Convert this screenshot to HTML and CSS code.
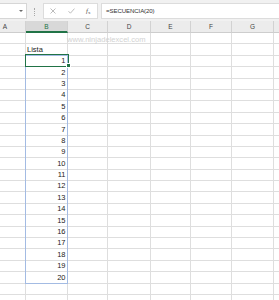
FILE: index.html
```html
<!DOCTYPE html>
<html>
<head>
<meta charset="utf-8">
<link rel="stylesheet" href="styles.css">
</head>
<body>
<div class="bar">
  <div class="namebox"><span class="caret"></span></div>
  <div class="grip"></div>
  <div class="fnbox">
    <svg class="ic-x" width="6" height="6" viewBox="0 0 6 6"><path d="M0.5 0.5L5.5 5.5M5.5 0.5L0.5 5.5" stroke="#b4b4b4" stroke-width="0.9" fill="none"/></svg>
    <svg class="ic-ok" width="7" height="6" viewBox="0 0 7 6"><path d="M0.5 3.2L2.4 5.2L6.5 0.6" stroke="#b4b4b4" stroke-width="0.9" fill="none"/></svg>
    <span class="fx"><i>f</i><sub>x</sub></span>
  </div>
  <div class="formula">=SECUENCIA(20)</div>
</div>
<div class="sheet">
  <div class="grid">
    <div class="h">A</div><div class="h sel">B</div><div class="h">C</div><div class="h">D</div><div class="h">E</div><div class="h">F</div><div class="h">G</div><div class="h"></div>
    <div class="c"></div><div class="c"></div><div class="c"></div><div class="c"></div><div class="c"></div><div class="c"></div><div class="c"></div><div class="c"></div>
    <div class="c"></div><div class="c l">Lista</div><div class="c"></div><div class="c"></div><div class="c"></div><div class="c"></div><div class="c"></div><div class="c"></div>
    <div class="c"></div><div class="c">1</div><div class="c"></div><div class="c"></div><div class="c"></div><div class="c"></div><div class="c"></div><div class="c"></div>
    <div class="c"></div><div class="c">2</div><div class="c"></div><div class="c"></div><div class="c"></div><div class="c"></div><div class="c"></div><div class="c"></div>
    <div class="c"></div><div class="c">3</div><div class="c"></div><div class="c"></div><div class="c"></div><div class="c"></div><div class="c"></div><div class="c"></div>
    <div class="c"></div><div class="c">4</div><div class="c"></div><div class="c"></div><div class="c"></div><div class="c"></div><div class="c"></div><div class="c"></div>
    <div class="c"></div><div class="c">5</div><div class="c"></div><div class="c"></div><div class="c"></div><div class="c"></div><div class="c"></div><div class="c"></div>
    <div class="c"></div><div class="c">6</div><div class="c"></div><div class="c"></div><div class="c"></div><div class="c"></div><div class="c"></div><div class="c"></div>
    <div class="c"></div><div class="c">7</div><div class="c"></div><div class="c"></div><div class="c"></div><div class="c"></div><div class="c"></div><div class="c"></div>
    <div class="c"></div><div class="c">8</div><div class="c"></div><div class="c"></div><div class="c"></div><div class="c"></div><div class="c"></div><div class="c"></div>
    <div class="c"></div><div class="c">9</div><div class="c"></div><div class="c"></div><div class="c"></div><div class="c"></div><div class="c"></div><div class="c"></div>
    <div class="c"></div><div class="c">10</div><div class="c"></div><div class="c"></div><div class="c"></div><div class="c"></div><div class="c"></div><div class="c"></div>
    <div class="c"></div><div class="c">11</div><div class="c"></div><div class="c"></div><div class="c"></div><div class="c"></div><div class="c"></div><div class="c"></div>
    <div class="c"></div><div class="c">12</div><div class="c"></div><div class="c"></div><div class="c"></div><div class="c"></div><div class="c"></div><div class="c"></div>
    <div class="c"></div><div class="c">13</div><div class="c"></div><div class="c"></div><div class="c"></div><div class="c"></div><div class="c"></div><div class="c"></div>
    <div class="c"></div><div class="c">14</div><div class="c"></div><div class="c"></div><div class="c"></div><div class="c"></div><div class="c"></div><div class="c"></div>
    <div class="c"></div><div class="c">15</div><div class="c"></div><div class="c"></div><div class="c"></div><div class="c"></div><div class="c"></div><div class="c"></div>
    <div class="c"></div><div class="c">16</div><div class="c"></div><div class="c"></div><div class="c"></div><div class="c"></div><div class="c"></div><div class="c"></div>
    <div class="c"></div><div class="c">17</div><div class="c"></div><div class="c"></div><div class="c"></div><div class="c"></div><div class="c"></div><div class="c"></div>
    <div class="c"></div><div class="c">18</div><div class="c"></div><div class="c"></div><div class="c"></div><div class="c"></div><div class="c"></div><div class="c"></div>
    <div class="c"></div><div class="c">19</div><div class="c"></div><div class="c"></div><div class="c"></div><div class="c"></div><div class="c"></div><div class="c"></div>
    <div class="c"></div><div class="c">20</div><div class="c"></div><div class="c"></div><div class="c"></div><div class="c"></div><div class="c"></div><div class="c"></div>
    <div class="c"></div><div class="c"></div><div class="c"></div><div class="c"></div><div class="c"></div><div class="c"></div><div class="c"></div><div class="c"></div>
    <div class="c"></div><div class="c"></div><div class="c"></div><div class="c"></div><div class="c"></div><div class="c"></div><div class="c"></div><div class="c"></div>
    <div class="spill"></div>
    <div class="active"><span class="handle"></span></div>
    <div class="wm">www.ninjadelexcel.com</div>
  </div>
</div>
</body>
</html>
```
FILE: styles.css
```css
html, body {
  margin: 0;
  padding: 0;
  background: #ffffff;
  overflow: hidden;
  width: 279px;
  height: 300px;
  font-family: "Liberation Sans", Arial, sans-serif;
}

.bar {
  height: 21px;
  box-sizing: border-box;
  padding-top: 3px;
  background: #f1f1f1;
  display: flex;
  align-items: flex-start;
}

.namebox {
  width: 28px;
  height: 16px;
  box-sizing: border-box;
  margin-left: -1px;
  background: #ffffff;
  border: 1px solid #d6d6d6;
  display: flex;
  align-items: center;
  justify-content: flex-end;
  padding-right: 3px;
}

.caret {
  width: 0;
  height: 0;
  border-left: 2px solid transparent;
  border-right: 2px solid transparent;
  border-top: 2.5px solid #6a6a6a;
}

.grip {
  width: 0;
  height: 8px;
  margin: 5px 0 0 7px;
  border-left: 1px dotted #a8a8a8;
}

.fnbox {
  width: 55px;
  height: 16px;
  box-sizing: border-box;
  margin-left: 8px;
  background: #ffffff;
  border: 1px solid #dcdcdc;
  display: flex;
  align-items: center;
}

.ic-x { margin-left: 6px; }
.ic-ok { margin-left: 12px; }

.fx {
  margin-left: 11px;
  font-family: "Liberation Serif", serif;
  font-size: 7px;
  color: #555555;
  line-height: 1;
}
.fx sub { font-size: 5px; vertical-align: -1px; font-style: normal; }

.formula {
  flex: 1;
  min-width: 0;
  height: 16px;
  box-sizing: border-box;
  margin-left: 3px;
  background: #ffffff;
  border: 1px solid #dcdcdc;
  border-right: none;
  padding-left: 4px;
  font-size: 6.1px;
  letter-spacing: -0.1px;
  line-height: 14px;
  color: #333333;
}

.sheet {
  position: relative;
}

.grid {
  position: relative;
  margin-left: -15px;
  display: grid;
  grid-template-columns: 41px 42px 40px 43px 40px 41px 42px 41px;
  grid-template-rows: 12px;
  grid-auto-rows: 11.4px;
}

.h {
  background: #ececec;
  border-right: 1px solid #d2d2d2;
  border-bottom: 1px solid #cdcdcd;
  box-sizing: border-box;
  font-size: 6.5px;
  color: #444444;
  display: flex;
  align-items: center;
  justify-content: center;
}

.h.sel {
  background: #d8d8d8;
  color: #217346;
  border-bottom: 2px solid #217346;
}

.c {
  border-right: 1px solid #dedede;
  border-bottom: 1px solid #dedede;
  box-sizing: border-box;
  font-size: 7.5px;
  line-height: 10px;
  color: #222222;
  display: flex;
  align-items: flex-end;
  justify-content: flex-end;
  padding-right: 1.5px;
  white-space: nowrap;
}

.c.l {
  justify-content: flex-start;
  padding-left: 1px;
}

.spill {
  position: absolute;
  left: 40px;
  top: 34px;
  width: 43px;
  height: 229px;
  box-sizing: border-box;
  border: 1px solid #a3bbe3;
}

.active {
  position: absolute;
  left: 40px;
  top: 33.3px;
  width: 44px;
  height: 12.4px;
  box-sizing: border-box;
  border: 1.6px solid #217346;
}

.handle {
  position: absolute;
  right: -2.5px;
  bottom: -2.5px;
  width: 3px;
  height: 3px;
  background: #217346;
  border: 0.5px solid #ffffff;
}

.wm {
  position: absolute;
  left: 82px;
  top: 14px;
  font-size: 7.6px;
  color: #d2d2d2;
  white-space: nowrap;
}
```
